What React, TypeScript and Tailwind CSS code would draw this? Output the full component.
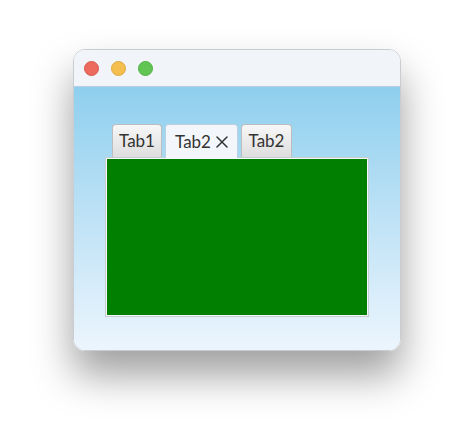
export default function App() {
  return (
    <div className="w-[474px] h-[447px] bg-white pt-[49px] pl-[73px]">
      <div className="w-[328px] h-[302px] rounded-[12px] overflow-hidden border border-[#c9ccd1] shadow-[0_24px_40px_rgba(0,0,0,0.38)] flex flex-col">
        <div className="h-[37px] bg-[#f1f5fa] border-b border-[#b8cde0] flex items-center gap-[12px] pl-[10px] shrink-0">
          <div className="w-[15px] h-[15px] rounded-full bg-[#ec6a5e] border border-[#d65a4e]" />
          <div className="w-[15px] h-[15px] rounded-full bg-[#f4bf4f] border border-[#dca83f]" />
          <div className="w-[15px] h-[15px] rounded-full bg-[#61c554] border border-[#50b045]" />
        </div>
        <div className="flex-1 bg-gradient-to-b from-[#8ecfee] to-[#ecf5fd] pt-[37px] pl-[31px]">
          <div className="flex gap-[3px] pl-[7px] h-[33px] items-stretch font-['Lato',sans-serif] text-[17px] text-[#333]">
            <div className="w-[50px] rounded-t-[4px] border border-b-0 border-[#bdbdbd] bg-gradient-to-b from-[#f7f7f7] to-[#dedede] flex items-center justify-center">Tab1</div>
            <div className="w-[73px] rounded-t-[4px] border border-b-0 border-[#bcd0e0] bg-[#f3f7fb] flex items-center justify-center gap-[5px] relative z-10 h-[34px]">
              <span>Tab2</span>
              <svg width="12" height="12" viewBox="0 0 12 12" className="mt-[1px]">
                <path d="M1 1L11 11M11 1L1 11" stroke="#333" strokeWidth="1.5" strokeLinecap="round" />
              </svg>
            </div>
            <div className="w-[51px] rounded-t-[4px] border border-b-0 border-[#bdbdbd] bg-gradient-to-b from-[#f7f7f7] to-[#dedede] flex items-center justify-center">Tab2</div>
          </div>
          <div className="w-[264px] h-[160px] border border-[#c6cdd1] bg-[#f5f7f9] p-px">
            <div className="w-full h-full bg-[#007f00]" />
          </div>
        </div>
      </div>
    </div>
  );
}
